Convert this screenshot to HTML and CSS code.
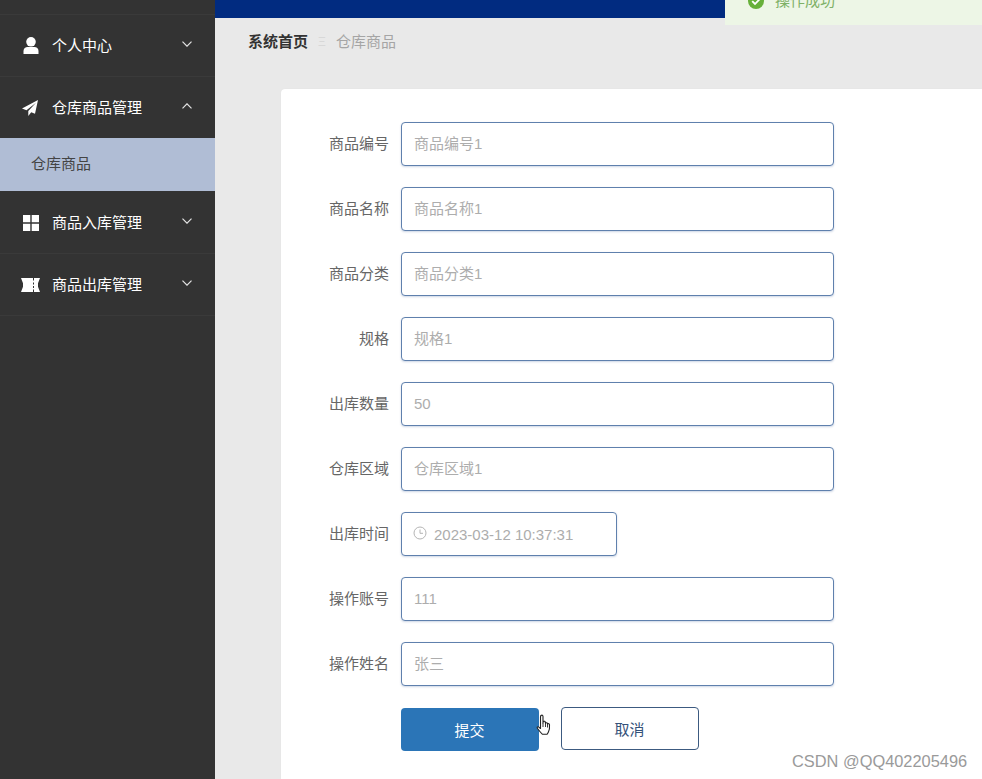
FILE: index.html
```html
<!DOCTYPE html>
<html lang="zh">
<head>
<meta charset="utf-8">
<title>仓库商品</title>
<link rel="stylesheet" href="styles.css">
</head>
<body>
<aside class="sidebar">
  <div class="nav-item">
    <svg class="nav-icon" viewBox="0 0 16 17"><circle cx="8" cy="4.800" r="4.800" fill="#fff"/><path d="M.5 17v-3C.5 11.400 2.500 10 4.500 10h7c2 0 4 1.400 4 4v3z" fill="#fff"/></svg>
    <span class="nav-label">个人中心</span>
    <svg class="chevron" viewBox="0 0 10 6"><path d="M.5.700 5 5.200 9.500.700" /></svg>
  </div>
  <div class="nav-item">
    <svg class="nav-icon nav-icon-plane" viewBox="0 0 16 16"><path d="M16 0 0 8.500l4.500 1.700L14 2.800 6.300 11v5l2.900-3.700 3.800 1.500z" fill="#fff"/></svg>
    <span class="nav-label">仓库商品管理</span>
    <svg class="chevron" viewBox="0 0 10 6"><path d="M.5 5.300 5 .800l4.500 4.500" /></svg>
  </div>
  <div class="nav-sub">仓库商品</div>
  <div class="nav-item">
    <svg class="nav-icon nav-icon-grid" viewBox="0 0 16 16"><path d="M0 0h7.300v7.300H0zM8.700 0H16v7.300H8.700zM0 8.700h7.300V16H0zM8.700 8.700H16V16H8.700z" fill="#fff"/></svg>
    <span class="nav-label">商品入库管理</span>
    <svg class="chevron" viewBox="0 0 10 6"><path d="M.5.700 5 5.200 9.500.700" /></svg>
  </div>
  <div class="nav-item">
    <svg class="nav-icon nav-icon-wide" viewBox="0 0 19 14"><path d="M0 0h12v2.500h1V0h6l-2 5.200v3.600l2 5.200h-6v-2.500h-1V14H0l2-5.200V5.200zM12 4.500v2h1v-2zM12 8v2h1V8z" fill="#fff" fill-rule="evenodd"/></svg>
    <span class="nav-label">商品出库管理</span>
    <svg class="chevron" viewBox="0 0 10 6"><path d="M.5.700 5 5.200 9.500.700" /></svg>
  </div>
</aside>

<main class="main">
  <div class="topbar"></div>
  <nav class="breadcrumb">
    <span class="crumb-home">系统首页</span>
    <span class="crumb-sep">Ξ</span>
    <span class="crumb-current">仓库商品</span>
  </nav>
  <form class="card">
    <div class="row"><label class="label">商品编号</label><input class="field" placeholder="商品编号1"></div>
    <div class="row"><label class="label">商品名称</label><input class="field" placeholder="商品名称1"></div>
    <div class="row"><label class="label">商品分类</label><input class="field" placeholder="商品分类1"></div>
    <div class="row"><label class="label">规格</label><input class="field" placeholder="规格1"></div>
    <div class="row"><label class="label">出库数量</label><input class="field" placeholder="50"></div>
    <div class="row"><label class="label">仓库区域</label><input class="field" placeholder="仓库区域1"></div>
    <div class="row"><label class="label">出库时间</label>
      <div class="date-field">
        <svg class="clock" viewBox="0 0 14 14"><circle cx="7" cy="7" r="6"/><path d="M7 3.500V7.300H10"/></svg>
        <span class="date-value">2023-03-12 10:37:31</span>
      </div>
    </div>
    <div class="row"><label class="label">操作账号</label><input class="field" placeholder="111"></div>
    <div class="row"><label class="label">操作姓名</label><input class="field" placeholder="张三"></div>
    <div class="actions">
      <button type="button" class="btn btn-primary">提交</button>
      <button type="button" class="btn btn-cancel">取消</button>
    </div>
  </form>
</main>

<div class="toast">
  <svg class="toast-icon" viewBox="0 0 16 16"><circle cx="8" cy="8" r="8" fill="#67b03a"/><path d="M4.200 8.200 7 11l5-5.200" fill="none" stroke="#fff" stroke-width="1.800"/></svg>
  <span class="toast-text">操作成功</span>
</div>

<svg class="cursor" viewBox="0 0 16 22"><path d="M5 1.500c1-.8 2-.3 2 1V9l.3-1.500c1-.5 2-.2 2 1l.2.500c.8-.6 1.900-.3 2 .8.800-.4 1.900-.1 2 1 .2 2.500 0 5-1 7-.5 1.200-1 2-1.500 2.500H6.500C5 19 3 16.500 1.500 14.500c-.8-1 0-2 1-1.700L4.500 14.500V3c0-.6.100-1.100.5-1.500z" fill="#fff" stroke="#222" stroke-width="1.100" stroke-linejoin="round"/><path d="M7 9v4M9.500 9v4M11.500 10v3.500" fill="none" stroke="#222" stroke-width=".9"/></svg>

<div class="watermark">CSDN @QQ402205496</div>
</body>
</html>
```
FILE: styles.css
```css
* { box-sizing: border-box; }

html, body {
  margin: 0;
  height: 100%;
  overflow: hidden;
}

body {
  display: flex;
  position: relative;
  background: #e9e9e9;
  font-family: "Liberation Sans", "Noto Sans CJK SC", sans-serif;
  font-size: 15px;
}

.sidebar {
  width: 215px;
  flex: none;
  background: #333333;
  padding-top: 14px;
}

.nav-item {
  height: 62px;
  display: flex;
  align-items: center;
  padding: 0 22px 0 23px;
  border-top: 1px solid #3a3a3a;
  color: #fff;
}

.nav-sub + .nav-item {
  border-top: 0;
  padding-top: 2px;
}

.nav-item:last-child { border-bottom: 1px solid #3a3a3a; height: 63px; }

.nav-icon {
  width: 16px;
  height: 17px;
  flex: none;
}

.nav-icon-plane {
  height: 16px;
  margin-left: -1px;
  margin-right: 1px;
}

.nav-icon-grid { height: 16px; }

.nav-icon-wide {
  width: 19px;
  height: 14px;
  margin-left: -2px;
  margin-right: -1px;
}

.nav-label {
  margin-left: 13px;
  flex: 1;
  line-height: 20px;
}

.chevron {
  width: 10px;
  height: 6px;
  margin-right: 1px;
  margin-top: -3px;
  fill: none;
  stroke: #e4e4e4;
  stroke-width: 1.200;
}

.nav-sub + .nav-item .chevron { margin-top: -5px; }

.nav-sub {
  height: 53px;
  background: #b0bdd5;
  color: #444;
  padding: 0 0 4px 31px;
  display: flex;
  align-items: center;
}

.main {
  flex: 1;
  min-width: 0;
  display: flex;
  flex-direction: column;
  overflow: hidden;
}

.topbar {
  height: 18px;
  flex: none;
  background: #012b80;
  margin-right: 257px;
}

.breadcrumb {
  height: 71px;
  flex: none;
  padding: 13px 0 0 33px;
  display: flex;
  align-items: flex-start;
  line-height: 22px;
  color: #a5a5a5;
}

.crumb-home { color: #333; font-weight: 700; }

.crumb-sep {
  margin: 0 10px;
  width: 8px;
  overflow: hidden;
  color: #d8d8d8;
  font-size: 12px;
}

.card {
  flex: 1;
  margin-left: 66px;
  background: #fff;
  border-top-left-radius: 4px;
  box-shadow: 0 0 1px #d8d8d8;
  padding: 33px 0 0 0;
  display: flex;
  flex-direction: column;
  gap: 21px;
}

.row {
  display: flex;
  align-items: center;
  height: 44px;
}

.label {
  width: 108px;
  flex: none;
  text-align: right;
  color: #666;
  line-height: 20px;
  margin-top: -1px;
}

.field, .date-field {
  margin-left: 12px;
  height: 44px;
  background: #fff;
  border: 1px solid #5f80ad;
  border-radius: 4px;
  box-shadow: 0 1px 2px rgba(90, 120, 170, .3);
}

.field {
  width: 433px;
  padding: 0 12px 2px;
  font: inherit;
  font-size: 15px;
  color: #666;
  outline: 0;
}

.field::placeholder {
  color: #adadad;
  opacity: 1;
}

.date-field {
  width: 216px;
  display: flex;
  align-items: center;
  padding-left: 11px;
  gap: 7px;
}

.clock {
  width: 14px;
  height: 14px;
  margin-top: -3px;
  fill: none;
  stroke: #b5b5b5;
  stroke-width: 1;
}

.date-value { color: #adadad; }

.actions {
  display: flex;
  align-items: flex-start;
  gap: 22px;
  margin-left: 120px;
}

.btn {
  width: 138px;
  height: 43px;
  border-radius: 4px;
  font: inherit;
  font-size: 15px;
  padding: 0 1px 0 0;
}

.btn-primary {
  background: #2b75b7;
  border: 0;
  color: #fff;
  margin-top: 1px;
}

.btn-cancel {
  background: #fff;
  border: 1px solid #3c5a80;
  color: #34527a;
}

.toast {
  position: absolute;
  left: 725px;
  top: -24px;
  width: 257px;
  height: 49px;
  background: #edf6e6;
  display: flex;
  align-items: center;
  padding-left: 23px;
  color: #7fb167;
}

.toast-icon {
  width: 16px;
  height: 16px;
  flex: none;
}

.toast-text { margin-left: 11px; line-height: 20px; }

.cursor {
  position: absolute;
  left: 536px;
  top: 714px;
  width: 16px;
  height: 22px;
}

.watermark {
  position: absolute;
  left: 792px;
  top: 751px;
  font-family: "Liberation Sans", sans-serif;
  font-size: 16.400px;
  line-height: 20px;
  color: #9a9a9a;
  white-space: nowrap;
}
```
